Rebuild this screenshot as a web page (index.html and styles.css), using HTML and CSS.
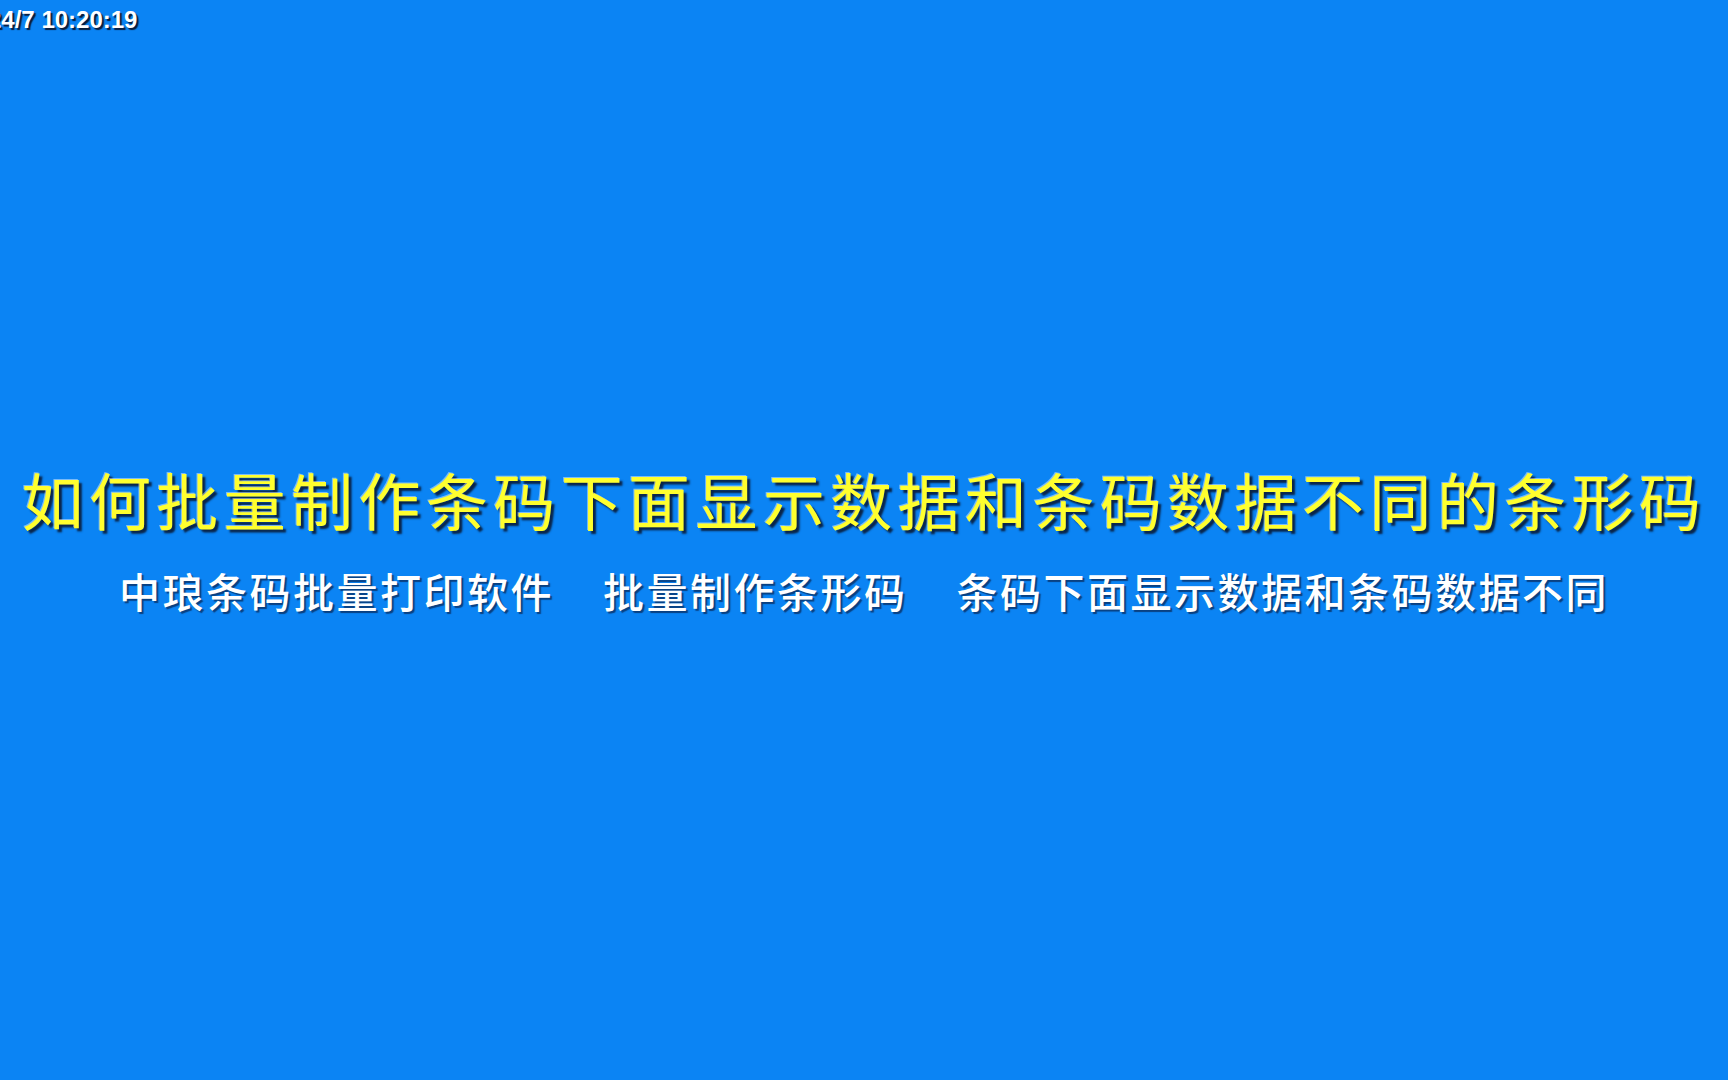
FILE: index.html
```html
<!DOCTYPE html>
<html lang="zh-CN">
<head>
    <meta charset="UTF-8">
    <title>如何批量制作条码下面显示数据和条码数据不同的条形码</title>
    <link rel="stylesheet" href="styles.css">
</head>
<body>
    <div class="stamp">24/7 10:20:19</div>
    <div class="slide">
        <h1 class="title">如何批量制作条码下面显示数据和条码数据不同的条形码</h1>
        <p class="sub">
            <span>中琅条码批量打印软件</span>
            <span>批量制作条形码</span>
            <span>条码下面显示数据和条码数据不同</span>
        </p>
    </div>
</body>
</html>
```

FILE: styles.css
```css
html, body {
    margin: 0;
    padding: 0;
    height: 100%;
}

body {
    background-color: #0b84f4;
    overflow: hidden;
    font-family: 'Noto Sans CJK SC', 'Noto Sans', sans-serif;
}

/* 左上角时间戳 */
.stamp {
    padding-top: 6px;
    text-indent: -12px;
    font-family: 'Liberation Sans', Arial, sans-serif;
    font-weight: bold;
    font-size: 24px;
    line-height: 28px;
    color: #ffffff;
    white-space: nowrap;
    text-shadow: 2px 2px 1px #0b1d3a;
}

.slide {
    display: flex;
    flex-direction: column;
    align-items: center;
    padding-top: 434px;
}

.title {
    margin: 0;
    font-size: 62px;
    line-height: 62px;
    font-weight: 400;
    letter-spacing: 5.4px;
    color: #ffff2e;
    white-space: nowrap;
    text-shadow: -1px -1px 0 rgba(255, 255, 255, 0.45), 3px 3px 2px #0a2448;
}

.sub {
    display: flex;
    gap: 49px;
    margin: 40px 0 0;
    font-size: 41px;
    line-height: 41px;
    font-weight: 500;
    letter-spacing: 2.5px;
    color: #ffffff;
    white-space: nowrap;
    text-shadow: 2px 2px 1px rgba(8, 36, 80, 0.7);
}
```
